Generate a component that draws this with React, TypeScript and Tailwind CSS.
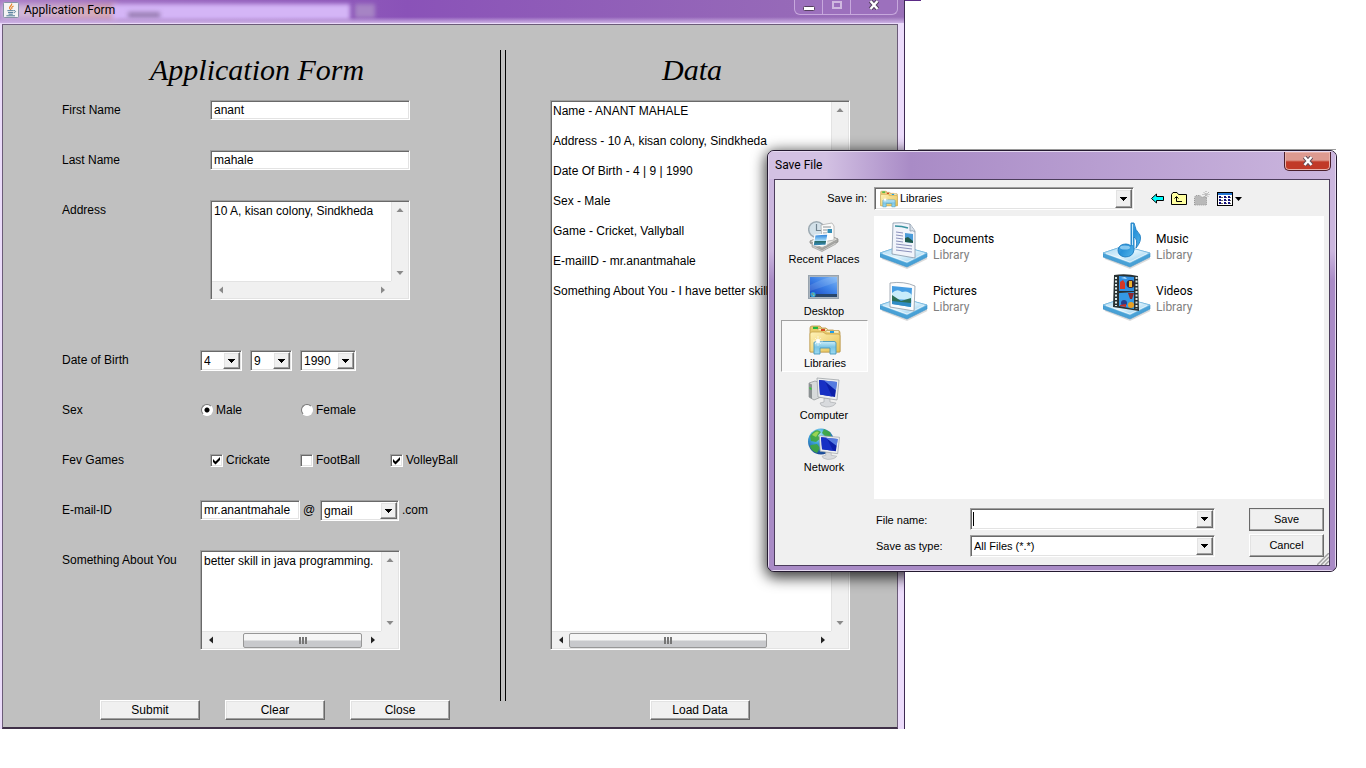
import type { ReactNode } from "react";
import clsx from "clsx";

const sunken =
  "border p-px border-t-[#a0a0a0] border-l-[#a0a0a0] border-r-white border-b-white shadow-[inset_1px_1px_#696969,inset_-1px_-1px_#e3e3e3]";
const raised =
  "border border-t-white border-l-white border-r-[#696969] border-b-[#696969] bg-[#f0f0f0] shadow-[inset_-1px_-1px_#a0a0a0,inset_1px_1px_#e3e3e3]";

const days = Array.from({ length: 31 }, (_, i) => String(i + 1));
const months = Array.from({ length: 12 }, (_, i) => String(i + 1));
const years = ["1988", "1989", "1990", "1991", "1992"];
const games = [
  { name: "Crickate", on: true },
  { name: "FootBall", on: false },
  { name: "VolleyBall", on: true },
];

const summary = [
  "Name - ANANT MAHALE",
  "Address - 10 A, kisan colony, Sindkheda",
  "Date Of Birth - 4 | 9 | 1990",
  "Sex - Male",
  "Game - Cricket, Vallyball",
  "E-mailID - mr.anantmahale",
  "Something About You - I have better skill in java programming.",
].join("\n\n");

/* ---------- small parts ---------- */

function Arrow({ dir, color = "#8a8a8a" }: { dir: "up" | "down" | "left" | "right"; color?: string }) {
  const d = {
    up: "M0.5 6L4 2L7.5 6Z",
    down: "M0.5 2L4 6L7.5 2Z",
    left: "M6 0.5L2 4L6 7.5Z",
    right: "M2 0.5L6 4L2 7.5Z",
  }[dir];
  return (
    <svg viewBox="0 0 8 8" className="size-2" aria-hidden="true">
      <path d={d} fill={color} />
    </svg>
  );
}

function DropButton() {
  return (
    <span className={clsx(raised, "flex w-[17px] shrink-0 items-center justify-center self-stretch pointer-events-none")}>
      <svg viewBox="0 0 7 4" className="h-1 w-[7px]" shapeRendering="crispEdges" aria-hidden="true">
        <path d="M0 0H7V1H6V2H5V3H4V4H3V3H2V2H1V1H0Z" fill="#000" />
      </svg>
    </span>
  );
}

function Combo({
  id,
  label,
  value,
  options,
  className,
  icon,
}: {
  id: string;
  label?: string;
  value: string;
  options: string[];
  className?: string;
  icon?: ReactNode;
}) {
  return (
    <div className={clsx(sunken, "flex items-center bg-white", className)}>
      {icon}
      <select
        id={id}
        aria-label={label}
        defaultValue={value}
        className="h-full min-w-0 flex-1 appearance-none bg-transparent pl-0.5 outline-none"
      >
        {options.map((o) => (
          <option key={o}>{o}</option>
        ))}
      </select>
      <DropButton />
    </div>
  );
}

function ScrollPane({
  children,
  thumb,
  className,
}: {
  children: ReactNode;
  thumb?: string;
  className?: string;
}) {
  return (
    <div className={clsx(sunken, "grid grid-cols-[1fr_17px] grid-rows-[1fr_17px] bg-[#f0f0f0]", className)}>
      {children}
      <div className="flex flex-col items-center justify-between border-l border-[#e3e3e3] py-1">
        <Arrow dir="up" />
        <Arrow dir="down" />
      </div>
      <div className="flex items-center border-t border-[#e3e3e3]">
        <span className="flex w-[17px] justify-center">
          <Arrow dir="left" color={thumb ? "#222" : undefined} />
        </span>
        <div className="flex h-full flex-1 items-center">
          {thumb && (
            <div
              className={clsx(
                "flex h-[15px] items-center justify-center gap-px rounded-xs border border-[#979797] bg-linear-to-b from-[#f6f6f6] from-45% to-[#c8c9cc] to-55%",
                thumb
              )}
            >
              <i className="h-[7px] w-0.5 bg-[#777]" />
              <i className="h-[7px] w-0.5 bg-[#777]" />
              <i className="h-[7px] w-0.5 bg-[#777]" />
            </div>
          )}
        </div>
        <span className="flex w-[17px] justify-center">
          <Arrow dir="right" color={thumb ? "#222" : undefined} />
        </span>
      </div>
    </div>
  );
}

function Row({ label, htmlFor, children, tall }: { label: string; htmlFor?: string; children: ReactNode; tall?: boolean }) {
  return (
    <div className={clsx("grid grid-cols-[138px_1fr] items-start", tall ? "pb-[50px]" : "h-[50px]")}>
      {htmlFor ? (
        <label htmlFor={htmlFor} className="leading-5">{label}</label>
      ) : (
        <span className="leading-5">{label}</span>
      )}
      {children}
    </div>
  );
}

function PushButton({ children }: { children: string }) {
  return (
    <button type="button" className={clsx(raised, "h-5 w-[100px] leading-4")}>
      {children}
    </button>
  );
}

/* ---------- icons ---------- */

function JavaIcon() {
  return (
    <svg viewBox="0 0 16 16" className="size-4" aria-hidden="true">
      <rect x=".5" y=".5" width="15" height="15" rx="1" fill="#f4f4f4" stroke="#8593a5" />
      <path d="M8.6 1.5C9.6 3.4 6 4.4 6.6 6.2C6.9 7 7.6 7.4 7.8 8M10.6 4C9 4.8 8.2 5.6 9 7" fill="none" stroke="#e8842c" strokeWidth="1.2" />
      <path d="M4.4 8.7H10.6M5 10.6H10.2M5.6 12.2H9.8M3.4 13.8H12M10.8 8.6C13.2 8.3 12.8 10.6 10.8 10.8" fill="none" stroke="#4d7896" strokeWidth="1" />
    </svg>
  );
}

function LibrariesIcon({ className }: { className: string }) {
  return (
    <svg viewBox="0 0 32 32" className={className} aria-hidden="true">
      <defs>
        <linearGradient id="folder" x1="0" y1="0" x2="1" y2="1">
          <stop offset="0" stopColor="#fff3b8" />
          <stop offset="1" stopColor="#e6c052" />
        </linearGradient>
        <linearGradient id="stand" x1="0" y1="0" x2="0" y2="1">
          <stop offset="0" stopColor="#cdeef9" />
          <stop offset=".45" stopColor="#7cc5e4" />
          <stop offset="1" stopColor="#9bdaf0" />
        </linearGradient>
      </defs>
      <path d="M1 28V4Q1 2 3 2H11L13 4H17L19 6H24L26 7H30Q31 7 31 9V28Z" fill="#e9cb6d" stroke="#b8954b" strokeWidth=".8" />
      <path d="M4 2.8H9V5H4Z" fill="#21b83d" />
      <path d="M9 6V4.5H18L19 7" fill="#f7eec3" stroke="#b8954b" strokeWidth=".6" />
      <path d="M12 5H16V7H12Z" fill="#d8481e" />
      <path d="M17 8V6.5H30V9" fill="#f7eec3" stroke="#b8954b" strokeWidth=".6" />
      <path d="M21 7H25V9H21Z" fill="#1d9de8" />
      <path d="M1 10Q1 8 3 8H14L17 10H29Q31 10 31 12V27Q31 28 30 28H2Q1 28 1 27Z" fill="url(#folder)" stroke="#c19c42" strokeWidth=".7" />
      <path d="M5 30V19Q5 17.500 7 17.500H25Q27 17.500 27 19V30H21V24H11V30Z" fill="url(#stand)" stroke="#4697bd" strokeWidth=".9" />
      <path d="M9 12V22M4 17H14M6 14L12 20M12 14L6 20" stroke="#fff" strokeWidth=".7" opacity=".8" />
      <circle cx="9" cy="17" r="2" fill="#fff" />
    </svg>
  );
}

function RecentIcon() {
  return (
    <svg viewBox="0 0 32 32" className="size-8" aria-hidden="true">
      <defs>
        <linearGradient id="sky" x1="0" y1="0" x2="0" y2="1">
          <stop offset="0" stopColor="#1d77d6" />
          <stop offset=".55" stopColor="#a8defa" />
          <stop offset=".6" stopColor="#2b6c66" />
          <stop offset="1" stopColor="#348fd0" />
        </linearGradient>
      </defs>
      <path d="M2 23L14 31L30 22V19L19 15L2 21Z" fill="#a9a9a5" stroke="#858583" strokeWidth=".7" />
      <path d="M2 21L14 28L30 19L19 15Z" fill="#e4e4df" stroke="#91918e" strokeWidth=".6" />
      <circle cx="8.500" cy="9.500" r="7.800" fill="#d3e1e9" stroke="#9eabb3" strokeWidth="1.500" />
      <path d="M8.500 4V10.500H13" fill="none" stroke="#71838f" strokeWidth="1.200" />
      <path d="M13 5L24 3L26 6V20L14 22Z" fill="#fbfbfa" stroke="#999" strokeWidth=".6" />
      <path d="M15 7H23M15 10H19M15 13H19" stroke="#8b9298" strokeWidth="1" />
      <rect x="19.500" y="9" width="4.500" height="4" fill="#318db7" />
      <path d="M7 15L20 14L18 25L5 26Z" fill="url(#sky)" stroke="#fff" strokeWidth="1.200" />
      <path d="M4 25L14 30L28 22V24L14 31.500L4 27Z" fill="#cfcfcb" stroke="#888" strokeWidth=".5" />
    </svg>
  );
}

function DesktopIcon() {
  return (
    <svg viewBox="0 0 32 32" className="size-8" aria-hidden="true">
      <defs>
        <linearGradient id="desk" x1="0" y1="1" x2="1" y2="0">
          <stop offset="0" stopColor="#1849c4" />
          <stop offset=".5" stopColor="#3c80e6" />
          <stop offset="1" stopColor="#7db7f6" />
        </linearGradient>
      </defs>
      <rect x=".5" y="3.500" width="30" height="23" fill="#aab5c0" stroke="#98a3ad" />
      <rect x="2" y="5" width="27" height="18" fill="url(#desk)" />
      <path d="M2 13Q17 6 22 5H29V10Q15 15 2 19Z" fill="#fff" opacity=".12" />
      <rect x="2" y="22" width="27" height="3" fill="#28476c" />
      <circle cx="5" cy="22.500" r="2.600" fill="#2fa2dc" />
      <path d="M3.800 21.500H4.800V22.500H3.800Z" fill="#f26b30" />
      <path d="M5.300 21.500H6.300V22.500H5.300Z" fill="#9bdb47" />
      <path d="M5.300 23H6.300V23.800H5.300Z" fill="#ffe15a" />
    </svg>
  );
}

function Screen() {
  return (
    <>
      <path d="M16 22H22V26L28 27Q26 31 18 31Q12 30 12 27L16 26Z" fill="#d8dadd" stroke="#a3a6a9" strokeWidth=".6" />
      <path d="M9 2L31 4L29 24L10 21Z" fill="#eceeef" stroke="#9fa4a8" strokeWidth=".8" />
      <path d="M11 4L29 6L27 21L12 18.500Z" fill="#0b1fa8" />
      <path d="M11 4L17 4.700L24 20.500L12 18.500Z" fill="#1730c4" />
      <path d="M16 4.600L29 6L28 14.500Z" fill="#6f9bf3" opacity=".75" />
    </>
  );
}

function ComputerIcon() {
  return (
    <svg viewBox="0 0 32 32" className="size-8" aria-hidden="true">
      <path d="M1 7L7 5L13 7V21L6 24L1 21Z" fill="#d7dadb" stroke="#8c9092" strokeWidth=".7" />
      <path d="M1 7L4 8.500V23L1 21Z" fill="#8b9092" />
      <path d="M1.500 11L3.500 12V14L1.500 13Z" fill="#35cc35" />
      <Screen />
    </svg>
  );
}

function NetworkIcon() {
  return (
    <svg viewBox="0 0 32 32" className="size-8" aria-hidden="true">
      <defs>
        <radialGradient id="globe" cx=".4" cy=".25" r=".8">
          <stop offset="0" stopColor="#b5f1fb" />
          <stop offset=".4" stopColor="#3da2d9" />
          <stop offset="1" stopColor="#123a8c" />
        </radialGradient>
      </defs>
      <circle cx="13" cy="13.500" r="13" fill="url(#globe)" />
      <path d="M2 8Q8 -1 13 4L10 8L13 10L8 14L3 13ZM16 1L22 4L23 9L17 8L14 5ZM3 17L9 16L12 20L9 25Q3 23 2 18Z" fill="#40a63b" opacity=".9" />
      <path d="M4 7Q8 2 11 4L8 9Z" fill="#b0df55" opacity=".8" />
      <g transform="translate(3 6) scale(.92 .82)">
        <Screen />
      </g>
    </svg>
  );
}

function LibraryTray({ children }: { children: ReactNode }) {
  return (
    <svg viewBox="0 0 48 48" className="size-12" aria-hidden="true">
      <defs>
        <linearGradient id="tray" x1="0" y1="0" x2="1" y2="1">
          <stop offset="0" stopColor="#9dd3f1" />
          <stop offset=".5" stopColor="#e1f4fd" />
          <stop offset="1" stopColor="#82c4ea" />
        </linearGradient>
        <linearGradient id="note" x1="0" y1="0" x2="1" y2="1">
          <stop offset="0" stopColor="#8fd0f5" />
          <stop offset=".5" stopColor="#2791d8" />
          <stop offset="1" stopColor="#65c5f3" />
        </linearGradient>
      </defs>
      <path d="M2 36L27 46L47 36" fill="none" stroke="#999" strokeWidth="2" opacity=".35" />
      <path d="M0 31L21 24L47 31V35L27 45L0 35Z" fill="#48a1d6" stroke="#3a8fc6" strokeWidth=".6" />
      <path d="M0 31L21 24L47 31L27 41Z" fill="url(#tray)" stroke="#70b7df" strokeWidth=".6" />
      <path d="M3 31.500L27 40L44 31.500" fill="none" stroke="#fff" strokeWidth=".6" />
      {children}
    </svg>
  );
}

function DocumentsIcon() {
  return (
    <LibraryTray>
      <path d="M13 1Q22 0 30 2L35 9V36L12 32Z" fill="#f1f4fb" stroke="#8797a8" strokeWidth=".8" />
      <path d="M30 2V9Q33 8 35 10" fill="#dbe2ea" stroke="#8797a8" strokeWidth=".8" />
      <path d="M15 4Q22 4 28 6" fill="none" stroke="#37929f" strokeWidth="1.400" />
      <path d="M16 10L23 11M16 13L23 14M16 16L23 17M16 19L23 20M16 22L32 24M16 25L32 27M16 28L32 30" stroke="#8b91bb" strokeWidth="1" />
      <path d="M25 11L33 12V21L25 20Z" fill="#4a9bd8" />
      <path d="M25 16L28 15L33 19V21L25 20Z" fill="#215a4c" />
    </LibraryTray>
  );
}

function MusicIcon() {
  return (
    <LibraryTray>
      <path d="M28 1H31Q32 8 37 13Q39 19 33 26Q35 17 31 15V28Q30 35 22 35Q15 34 15 28Q16 22 23 22Q26 22 28 24Z" fill="url(#note)" stroke="#1b7bc0" strokeWidth=".9" />
      <ellipse cx="22" cy="25.500" rx="5" ry="2" fill="#c5ebff" opacity=".6" />
      <path d="M29.500 2V23" stroke="#c9ecfd" strokeWidth="1" />
    </LibraryTray>
  );
}

function PicturesIcon() {
  return (
    <LibraryTray>
      <path d="M10 9Q24 7 35 12L34 37L10 33Z" fill="#fbfcfd" stroke="#8f9ba6" strokeWidth=".8" />
      <path d="M12 12L32 14L31 33L12 30Z" fill="#459de2" />
      <path d="M12 19Q17 14 22 18Q28 16 32 21V26L12 25Z" fill="#c7ecfb" />
      <path d="M12 21L21 27L31 24V30L12 28Z" fill="#2c7058" />
      <path d="M12 27L31 29V33L12 30Z" fill="#2f8cc4" />
    </LibraryTray>
  );
}

function VideosIcon() {
  return (
    <LibraryTray>
      <path d="M11 1Q23 -1 35 2L36 37L10 33Z" fill="#283133" />
      <path d="M16 2L31 3V17H16Z" fill="#2f8fe2" />
      <path d="M16 19L31 18V35L16 32Z" fill="#3499e5" />
      <path d="M13 3V32M33.500 3V35" stroke="#dfe9e6" strokeWidth="2" strokeDasharray="2 1.500" />
      <path d="M17 8L20 6L22 9V15H17Z" fill="#d93624" />
      <circle cx="27.500" cy="10" r="4" fill="#3a2530" />
      <path d="M26 7H29V13H26Z" fill="#f1b52c" />
      <path d="M18 4L22 3L24 5Z" fill="#c5e6fb" />
      <path d="M25 19H31L29 25H27Z" fill="#8f2630" />
      <circle cx="28" cy="31" r="3" fill="#e9a023" />
      <circle cx="21" cy="29" r="3" fill="#263f8b" />
      <path d="M17 31L23 30V33L17 32Z" fill="#c6302b" />
    </LibraryTray>
  );
}

const places = [
  { name: "Recent Places", icon: <RecentIcon /> },
  { name: "Desktop", icon: <DesktopIcon /> },
  { name: "Libraries", icon: <LibrariesIcon className="size-8" />, active: true },
  { name: "Computer", icon: <ComputerIcon /> },
  { name: "Network", icon: <NetworkIcon /> },
];

const libraries = [
  { name: "Documents", icon: <DocumentsIcon /> },
  { name: "Music", icon: <MusicIcon /> },
  { name: "Pictures", icon: <PicturesIcon /> },
  { name: "Videos", icon: <VideosIcon /> },
];

/* ---------- windows ---------- */

function ApplicationForm() {
  return (
    <form className="w-[497px] shrink-0 pl-[59px] pt-[25px] pb-[7px]">
      <h1 className="mb-[10px] ml-[88px] font-['Liberation_Serif',serif] text-[30px] leading-10 italic">
        Application Form
      </h1>

      <Row label="First Name" htmlFor="first">
        <input id="first" defaultValue="anant" className={clsx(sunken, "ml-[10px] h-5 w-[200px] bg-white pl-[3px] outline-none")} />
      </Row>
      <Row label="Last Name" htmlFor="last">
        <input id="last" defaultValue="mahale" className={clsx(sunken, "ml-[10px] h-5 w-[200px] bg-white pl-[3px] outline-none")} />
      </Row>
      <Row label="Address" htmlFor="address" tall>
        <ScrollPane className="ml-[10px] h-[100px] w-[200px]">
          <textarea id="address" wrap="off" defaultValue="10 A, kisan colony, Sindkheda" className="resize-none overflow-hidden bg-white px-0.5 py-0.5 leading-[15px] outline-none" />
        </ScrollPane>
      </Row>
      <Row label="Date of Birth">
        <div className="flex gap-2">
          <Combo id="day" label="Day" value="4" options={days} className="h-[21px] w-[42px]" />
          <Combo id="month" label="Month" value="9" options={months} className="h-[21px] w-[42px]" />
          <Combo id="year" label="Year" value="1990" options={years} className="h-[21px] w-14" />
        </div>
      </Row>
      <Row label="Sex">
        <div className="flex">
          {["Male", "Female"].map((s) => (
            <label key={s} className="flex h-5 w-[100px] items-center gap-[3px] pl-px">
              <input
                type="radio"
                name="sex"
                defaultChecked={s === "Male"}
                className="size-3 appearance-none rounded-full border border-t-[#777] border-l-[#777] border-r-white border-b-white bg-white checked:bg-[radial-gradient(circle,#000_2px,#fff_3px)]"
              />
              {s}
            </label>
          ))}
        </div>
      </Row>
      <Row label="Fev Games">
        <div className="ml-[10px] flex">
          {games.map((g) => (
            <label key={g.name} className="relative flex h-5 w-[90px] items-center gap-[3px]">
              <input
                type="checkbox"
                defaultChecked={g.on}
                className={clsx(sunken, "peer size-[13px] shrink-0 appearance-none bg-white")}
              />
              <svg viewBox="0 0 13 13" className="absolute left-0 hidden size-[13px] peer-checked:block" aria-hidden="true">
                <path d="M3 5V8L5.500 10.500L10 6V3L5.500 7.500Z" fill="#000" />
              </svg>
              {g.name}
            </label>
          ))}
        </div>
      </Row>
      <Row label="E-mail-ID" htmlFor="email">
        <div className="flex items-start">
          <input id="email" defaultValue="mr.anantmahale" className={clsx(sunken, "h-5 w-[100px] bg-white pl-[3px] outline-none")} />
          <span className="w-5 pl-[3px] leading-5">@</span>
          <Combo id="host" label="Mail host" value="gmail" options={["gmail", "yahoo", "rediff"]} className="h-[21px] w-[79px]" />
          <span className="pl-[3px] leading-5">.com</span>
        </div>
      </Row>
      <Row label="Something About You" htmlFor="about" tall>
        <ScrollPane className="h-[100px] w-[200px]" thumb="ml-6 w-[119px]">
          <textarea id="about" wrap="off" defaultValue="better skill in java programming." className="resize-none overflow-hidden bg-white px-0.5 py-0.5 leading-[15px] outline-none" />
        </ScrollPane>
      </Row>

      <div className="ml-[38px] flex gap-[25px]">
        <PushButton>Submit</PushButton>
        <PushButton>Clear</PushButton>
        <PushButton>Close</PushButton>
      </div>
    </form>
  );
}

function MainWindow() {
  return (
    <main className="relative mr-[461px] min-w-[760px] overflow-hidden border-r border-[#3d2a52] bg-[#ecdcfb]">
      <header className="relative flex h-[23px] items-start justify-between bg-linear-to-r from-[#a679c4] via-[#8a52b8] via-45% to-[#9a70b8]">
        {/* glass showing the window behind */}
        <div className="absolute top-1 left-0 h-4 w-[116px] bg-linear-to-r from-[#cdb9e0] to-[#d9a9b4] blur-[3px]" />
        <div className="absolute top-1 left-[112px] h-4 w-[238px] bg-[#d4b5f6] blur-[2px]" />
        <div className="absolute top-1 left-[355px] h-3.5 w-5 bg-[#a684c4] blur-[2px]" />
        <div className="absolute top-3 left-[128px] h-1.5 w-8 bg-[#9a7fb4] blur-[2px]" />
        <div className="absolute inset-x-0 bottom-0 h-1.5 bg-linear-to-b from-transparent to-[#cdb2e4]" />
        <div className="relative flex h-5 items-center gap-[5px] pl-[3px]">
          <JavaIcon />
          <span className="font-[Roboto,sans-serif]">Application Form</span>
        </div>
        <div className="relative mr-1.5 flex h-[15px] divide-x divide-[#c7a8dd] rounded-b-md border border-t-0 border-[#c7a8dd] bg-[#9c70bd]">
          <button type="button" aria-label="Minimize" className="flex w-7 items-center justify-center">
            <svg viewBox="0 0 12 10" className="h-2.5 w-3"><rect x=".5" y="4.500" width="11" height="4" rx="1" fill="#fff" stroke="#55405f" /></svg>
          </button>
          <button type="button" aria-label="Maximize" className="flex w-7 items-center justify-center">
            <svg viewBox="0 0 10 8" className="mb-1 h-2 w-2.5"><rect x="1" y="1" width="8" height="6" fill="none" stroke="#d0b8e0" strokeWidth="2" /></svg>
          </button>
          <button type="button" aria-label="Close window" className="flex w-[46px] items-center justify-center">
            <svg viewBox="0 0 12 10" className="mb-1 h-2.5 w-3">
              <path d="M2.500 1L9.500 9M9.500 1L2.500 9" stroke="#55405f" strokeWidth="4.400" />
              <path d="M2.500 1L9.500 9M9.500 1L2.500 9" stroke="#fff" strokeWidth="2.400" />
            </svg>
          </button>
        </div>
      </header>

      <div className="mt-px mr-1.5 ml-0.5 flex border border-b-2 border-[#6b5b78] border-b-[#3f3048] bg-[#c0c0c0]">
        <ApplicationForm />
        <div className="mt-[25px] mb-[26px] w-1.5 border-x border-black" />
        <section className="flex flex-1 flex-col items-center pt-[25px] pr-[47px] pb-[7px] pl-11">
          <h2 className="mb-[10px] pr-4 font-['Liberation_Serif',serif] text-[30px] leading-10 italic">Data</h2>
          <ScrollPane className="mb-[50px] w-full flex-1" thumb="w-[81%]">
            <textarea readOnly aria-label="Data" wrap="off" value={summary} className="w-full resize-none overflow-hidden bg-white px-px py-0.5 leading-[15px] outline-none" />
          </ScrollPane>
          <PushButton>Load Data</PushButton>
        </section>
      </div>

      {/* shade the dialog casts on this window */}
      <div className="absolute top-[151px] left-[768px] h-[421px] w-[300px] rounded-lg shadow-[0_3px_14px_3px_rgba(0,0,0,0.75)]" />
    </main>
  );
}

function Toolbar() {
  return (
    <div className="flex items-center gap-[7px]">
      <button type="button" aria-label="Back">
        <svg viewBox="0 0 14 16" className="h-4 w-3.5">
          <path d="M1.500 7.500L6.500 3V5.500H13.500V9.500H6.500V12Z" fill="#0ff" stroke="#000" />
        </svg>
      </button>
      <button type="button" aria-label="Up one level">
        <svg viewBox="0 0 16 16" className="size-4">
          <path d="M.5 13.500V3.500L2 1.500H6L7.500 3.500H15.500V13.500Z" fill="#ffffa0" stroke="#000" />
          <path d="M5.500 6V10.500H11M3.500 7.500L5.500 5.500L7.500 7.500" fill="none" stroke="#000" />
        </svg>
      </button>
      <button type="button" aria-label="New folder" disabled>
        <svg viewBox="0 0 16 16" className="size-4">
          <path d="M.5 14V6L2 4.500H6L7.500 6H12.500V14Z" fill="#b9b9b9" stroke="#9a9a9a" strokeDasharray="1 1" />
          <path d="M12 0V7M8.500 3.500H16M9.500 1L15 6.500M15 1L9.500 6.500" stroke="#a0a0a0" strokeDasharray="1 1" />
        </svg>
      </button>
      <button type="button" aria-label="Views" className="flex items-center gap-0.5">
        <svg viewBox="0 0 16 14" className="h-3.5 w-4" shapeRendering="crispEdges">
          <path d="M0 0H16V14H0Z" fill="#000" />
          <path d="M1 3H15V13H1Z" fill="#fff" />
          <path d="M1 1H15V3H1Z" fill="#2374d1" />
          <path d="M2 4H4V6H2ZM7 4H9V6H7ZM11 4H13V6H11ZM2 7H4V9H2ZM7 7H9V9H7ZM11 7H13V9H11ZM2 10H4V12H2ZM7 10H9V12H7ZM11 10H13V12H11Z" fill="#10107c" />
          <path d="M4 5H6V6H4ZM9 5H10V6H9ZM13 5H14V6H13ZM4 8H6V9H4ZM9 8H10V9H9ZM13 8H14V9H13ZM4 11H6V12H4ZM9 11H10V12H9ZM13 11H14V12H13Z" fill="#666" />
        </svg>
        <svg viewBox="0 0 7 4" className="h-1 w-[7px]"><path d="M0 0H7L3.500 4Z" /></svg>
      </button>
    </div>
  );
}

function SaveDialog() {
  return (
    <div
      role="dialog"
      aria-label="Save File"
      className="absolute top-[150px] right-[29px] left-[767px] min-w-[560px] overflow-hidden rounded-[7px] border border-[#241a30] bg-[#a98bc6] bg-linear-to-b from-[#cbb6de] from-[100px] to-[#a98bc6] to-[130px] text-[11px]"
    >
      <div className="border border-[#e5d8f0] px-[5px] pb-1">
        <header className="-mx-[5px] flex h-[27px] items-start justify-between bg-linear-to-r from-[#d3c1e3] from-10% via-[#a98bc6] via-25% to-[#cbb6de] pr-1 pl-1.5">
          <span className="font-[Roboto,sans-serif] text-xs leading-[26px]">Save File</span>
          <button
            type="button"
            aria-label="Close dialog"
            className="flex h-[19px] w-[47px] items-center justify-center rounded-b-[5px] border border-t-0 border-[#4a1f2c] bg-linear-to-b from-[#dd9a90] from-45% to-[#c13a28] to-55% shadow-[inset_0_0_0_1px_#e8b3ab]"
          >
            <svg viewBox="0 0 12 10" className="h-2.5 w-3">
              <path d="M2.500 1L9.500 9M9.500 1L2.500 9" stroke="#63505a" strokeWidth="4.400" />
              <path d="M2.500 1L9.500 9M9.500 1L2.500 9" stroke="#fff" strokeWidth="2.400" />
            </svg>
          </button>
        </header>

        <div className="relative border border-[#4c3d5c] bg-[#f0f0f0] pt-[7px] pr-[5px] pb-2 pl-1.5">
          <div className="flex items-center">
            <label htmlFor="folder-in" className="w-[86px] text-right">Save in:</label>
            <Combo
              id="folder-in"
              value="Libraries"
              options={["Libraries", "Desktop", "Computer"]}
              className="mr-4 ml-[7px] h-[23px] w-[260px]"
              icon={<LibrariesIcon className="ml-1 size-[18px]" />}
            />
            <Toolbar />
          </div>

          <div className="mt-1.5 grid grid-cols-[87px_1fr] gap-x-1.5">
            <nav className="flex flex-col">
              {places.map((p) => (
                <button
                  key={p.name}
                  type="button"
                  className={clsx(
                    "flex h-[52px] flex-col items-center border pt-[3px]",
                    p.active
                      ? "border-t-[#a0a0a0] border-l-[#a0a0a0] border-r-white border-b-white bg-[#f8f8f8] pl-px"
                      : "border-transparent pr-px"
                  )}
                >
                  {p.icon}
                  <span className="leading-[15px]">{p.name}</span>
                </button>
              ))}
            </nav>
            <div>
              <ul className="grid h-[283px] grid-cols-[223px_1fr] content-start bg-white pt-1 pl-1.5">
                {libraries.map((l) => (
                  <li key={l.name} className="flex h-[52px] items-center gap-[5px] font-[Roboto,sans-serif] text-xs leading-4">
                    {l.icon}
                    <div className="pt-px">
                      <p>{l.name}</p>
                      <p className="text-[#808080]">Library</p>
                    </div>
                  </li>
                ))}
              </ul>
              <div className="mt-[9px] flex justify-between">
                <div className="grid grid-cols-[96px_245px] items-center gap-y-[5px]">
                  <label htmlFor="file-name" className="pt-0.5 pl-0.5">File name:</label>
                  <div className={clsx(sunken, "flex h-[22px] items-center bg-white")}>
                    <i className="ml-px h-3.5 w-px bg-black" />
                    <input id="file-name" className="h-full min-w-0 flex-1 outline-none" />
                    <DropButton />
                  </div>
                  <label htmlFor="file-type" className="pl-0.5">Save as type:</label>
                  <Combo id="file-type" value="All Files (*.*)" options={["All Files (*.*)"]} className="h-[22px]" />
                </div>
                <div className="flex flex-col gap-[3px]">
                  <button type="button" className={clsx(raised, "h-[23px] w-[75px] outline outline-[#696969] -outline-offset-1")}>Save</button>
                  <button type="button" className={clsx(raised, "h-[23px] w-[75px]")}>Cancel</button>
                </div>
              </div>
            </div>
          </div>
          <svg viewBox="0 0 12 12" className="absolute right-0 bottom-0 size-3" aria-hidden="true">
            <path d="M0 12L12 0M4 12L12 4M8 12L12 8" stroke="#a0a0a0" strokeWidth="1.500" />
          </svg>
        </div>
      </div>
    </div>
  );
}

export default function App() {
  return (
    <div className="relative min-h-screen bg-white font-['Liberation_Sans',Arial,sans-serif] text-xs text-black">
      <MainWindow />
      <SaveDialog />
      {/* slivers of the window behind */}
      <i className="absolute top-0 right-[445px] h-px w-4 bg-[#5b2a86]" />
      <i className="absolute top-[149px] right-[30px] left-[918px] h-px bg-[#9a9a9a]" />
    </div>
  );
}
